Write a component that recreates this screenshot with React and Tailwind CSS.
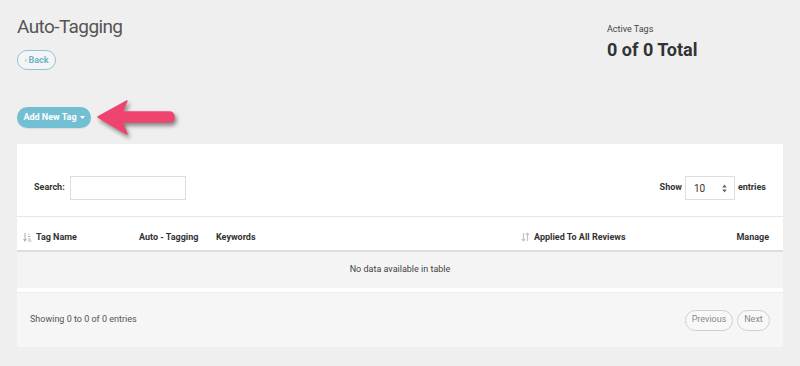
import React from "react";

function SortIcon({ alt }) {
  return (
    <svg width="9" height="10" viewBox="0 0 9 10" className="mr-[4px] shrink-0">
      {alt ? (
        <g stroke="#c4c4c4" strokeWidth="1.2" fill="none">
          <path d="M2.5 1v8M0.8 7.2l1.7 1.8 1.7-1.8" />
          <path d="M6.5 9V1M4.8 2.8l1.7-1.8 1.7 1.8" />
        </g>
      ) : (
        <g stroke="#b8b8b8" strokeWidth="1.2" fill="none">
          <path d="M2 1v8M0.5 7.2l1.5 1.8 1.5-1.8" />
          <path d="M5 2h1.5M5 4.5h2.3M5 7h3M5 9h3.5" />
        </g>
      )}
    </svg>
  );
}

function Arrow() {
  return (
    <svg
      width="84"
      height="42"
      viewBox="0 0 84 42"
      className="absolute left-[77px] top-[-9px] drop-shadow-[2px_3px_2px_rgba(0,0,0,0.45)]"
    >
      <path
        d="M4 19 L33 3 L28 14 L75 14 Q80 14 80 19 Q80 24 75 24 L28 24 L33 36 Z"
        fill="#ef446f"
        stroke="#ef446f"
        strokeWidth="1.5"
        strokeLinejoin="round"
      />
    </svg>
  );
}

export default function App() {
  return (
    <div
      className="min-h-screen bg-[#efefef] px-[17px] pt-[14px] pb-[19px] text-[#444]"
      style={{ fontFamily: "Roboto, 'Liberation Sans', sans-serif" }}
    >
      {/* Header */}
      <div className="flex justify-between">
        <div className="flex flex-col items-start">
          <h1 className="text-[19px] leading-[26px] tracking-[-0.6px] text-[#555]">Auto-Tagging</h1>
          <button className="mt-[10px] flex h-[20px] w-[39px] items-center justify-center rounded-full border border-[#8ec7d3] bg-white/40 text-[9px] font-bold text-[#6db5c6] leading-none">
            <span className="text-[7px] mr-[2px]">‹</span>Back
          </button>
        </div>
        <div className="w-[176px] pt-[9px]">
          <div className="text-[9px] leading-[12px] text-[#444]">Active Tags</div>
          <div className="mt-[4px] text-[18px] leading-[22px] font-bold text-[#333]">0 of 0 Total</div>
        </div>
      </div>

      {/* Add New Tag */}
      <div className="relative mt-[37px] mb-[16px] flex h-[21px]">
        <button className="flex h-[21px] w-[74px] items-center justify-center gap-[3px] rounded-full bg-[#72bfd3] text-[9px] font-bold text-white leading-none shadow-[0_1px_1px_rgba(0,0,0,0.08)]">
          Add New Tag
          <svg width="5" height="3" viewBox="0 0 5 3"><path d="M0 0h5L2.5 3Z" fill="#fff" /></svg>
        </button>
        <Arrow />
      </div>

      {/* Card */}
      <div className="bg-white">
        <div className="flex items-center justify-between pl-[17px] pr-[17px] pt-[32px] pb-[16px]">
          <label className="flex items-center text-[9px] font-bold text-[#333]">
            Search:
            <input className="ml-[5px] h-[24px] w-[116px] border border-[#ddd] outline-none" />
          </label>
          <div className="flex items-center text-[9px] font-bold text-[#333]">
            Show
            <div className="mx-[3px] flex h-[24px] w-[50px] items-center justify-between border border-[#ddd] pl-[8px] pr-[7px] font-normal text-[10px] text-[#333]">
              10
              <svg width="5" height="9" viewBox="0 0 5 9">
                <path d="M2.5 0.5L4.8 3.6H0.2Z M2.5 8.5L4.8 5.4H0.2Z" fill="#666" />
              </svg>
            </div>
            entries
          </div>
        </div>

        <div className="border-t border-[#e6e6e6]" />

        {/* Header row */}
        <div className="grid h-[33px] grid-cols-[116px_77px_305px_1fr_auto] items-end pb-[6px] pl-[6px] pr-[14px] text-[9px] font-bold text-[#333]">
          <div className="flex items-center"><SortIcon />Tag Name</div>
          <div>Auto - Tagging</div>
          <div>Keywords</div>
          <div className="flex items-center"><SortIcon alt />Applied To All Reviews</div>
          <div>Manage</div>
        </div>
        <div className="border-t-2 border-[#dedede]" />

        {/* Empty row */}
        <div className="flex h-[36px] items-center justify-center bg-[#f4f4f4] text-[9px] text-[#444]">
          No data available in table
        </div>
        <div className="h-[4px] bg-white" />
        <div className="border-t border-[#ececec]" />

        {/* Footer */}
        <div className="flex h-[54px] items-center justify-between bg-[#f6f6f6] pl-[13px] pr-[13px]">
          <div className="text-[9px] text-[#555]">Showing 0 to 0 of 0 entries</div>
          <div className="flex gap-[4px]">
            <button className="h-[21px] w-[48px] rounded-full border border-[#cfcfcf] bg-[#f8f8f8] text-[9px] text-[#888]">Previous</button>
            <button className="h-[21px] w-[33px] rounded-full border border-[#cfcfcf] bg-[#f8f8f8] text-[9px] text-[#888]">Next</button>
          </div>
        </div>
      </div>
    </div>
  );
}
